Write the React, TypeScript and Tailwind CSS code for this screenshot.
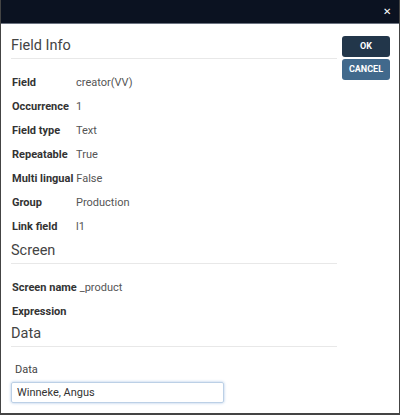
import React from "react";

const font = { fontFamily: "Roboto, 'Liberation Sans', sans-serif" };

const Row = ({ label, value }: { label: string; value?: string }) => (
  <div className="flex items-center h-6 text-[11px] whitespace-nowrap">
    <span className="min-w-[64px] pr-[3px] font-bold text-[#333]">{label}</span>
    <span className="text-[#555]">{value}</span>
  </div>
);

const Section = ({ title }: { title: string }) => (
  <div className="border-b border-[#e8e8e8] pb-[2px] mr-[54px]">
    <h2 className="text-[14.5px] text-[#444] leading-[20px]">{title}</h2>
  </div>
);

export default function App() {
  return (
    <div className="w-[400px] h-[415px] bg-white border-x border-b-2 border-[#444] flex flex-col overflow-hidden" style={font}>
      <div className="h-6 bg-[#0b1221] border-b border-[#6b7280] flex items-center justify-end pr-[8px] shrink-0">
        <span className="text-white text-[10px] leading-none">✕</span>
      </div>
      <div className="relative flex-1 pl-[10px] pr-2">
        <div className="absolute right-[9px] top-[12px] flex flex-col gap-[2px]">
          <button className="w-[48px] h-[21px] rounded-[3px] bg-[#22364a] text-white text-[9px] font-bold">OK</button>
          <button className="w-[48px] h-[21px] rounded-[3px] bg-[#41698c] text-white text-[9px] font-bold">CANCEL</button>
        </div>
        <div className="pt-[12px]">
          <Section title="Field Info" />
        </div>
        <div className="pt-[12px] pl-[1px]">
          <Row label="Field" value="creator(VV)" />
          <Row label="Occurrence" value="1" />
          <Row label="Field type" value="Text" />
          <Row label="Repeatable" value="True" />
          <Row label="Multi lingual" value="False" />
          <Row label="Group" value="Production" />
          <Row label="Link field" value="l1" />
        </div>
        <div className="mt-[2px]">
          <Section title="Screen" />
        </div>
        <div className="pt-[12px] pl-[1px]">
          <Row label="Screen name" value="_product" />
          <Row label="Expression" />
        </div>
        <Section title="Data" />
        <div className="pt-[15px] pl-[4px] text-[11px] text-[#444]">Data</div>
        <input
          readOnly
          value="Winneke, Angus"
          className="mt-[2px] w-[213px] h-[21px] border border-[#bcd0e6] rounded-[2px] shadow-[0_0_3px_#a9c4e4] px-[5px] text-[11px] text-[#333] outline-none"
        />
      </div>
    </div>
  );
}
